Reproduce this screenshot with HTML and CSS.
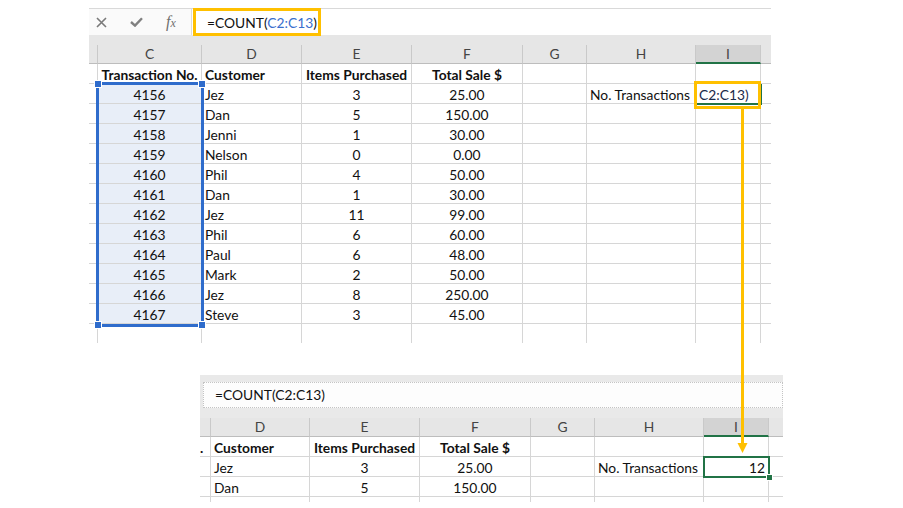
FILE: index.html
```html
<!DOCTYPE html>
<html>
<head>
<meta charset="utf-8">
<link rel="stylesheet" href="styles.css">
</head>
<body>
<div class="top">
  <div class="fbar">
    <div class="fbtns">
      <svg class="ic-x" width="11" height="11" viewBox="0 0 11 11"><path d="M1 1 L10 10 M10 1 L1 10" stroke="#7a7a7a" stroke-width="1.6" fill="none"/></svg>
      <svg class="ic-ok" width="13" height="10" viewBox="0 0 13 10"><path d="M1 5 L5 8.6 L12 1.2" stroke="#808080" stroke-width="2.4" fill="none"/></svg>
      <span class="fx">f<span class="fxx">x</span></span>
    </div>
    <div class="finput"><span class="ftext">=COUNT(<span class="ref">C2:C13</span>)</span><span class="caret"></span></div>
  </div>
  <div class="band"></div>
  <div class="r hdr">
    <div></div><div>C</div><div>D</div><div>E</div><div>F</div><div>G</div><div>H</div><div class="act">I</div><div class="end"></div>
  </div>
  <div class="r b">
    <div></div><div class="c">Transaction No.</div><div>Customer</div><div class="c">Items Purchased</div><div class="c">Total Sale $</div><div></div><div></div><div></div><div class="end"></div>
  </div>
  <div class="r"><div></div><div class="c sel">4156</div><div>Jez</div><div class="c">3</div><div class="c">25.00</div><div></div><div>No. Transactions</div><div class="edit">C2:C13)</div><div class="end"></div></div>
  <div class="r"><div></div><div class="c sel">4157</div><div>Dan</div><div class="c">5</div><div class="c">150.00</div><div></div><div></div><div></div><div class="end"></div></div>
  <div class="r"><div></div><div class="c sel">4158</div><div>Jenni</div><div class="c">1</div><div class="c">30.00</div><div></div><div></div><div></div><div class="end"></div></div>
  <div class="r"><div></div><div class="c sel">4159</div><div>Nelson</div><div class="c">0</div><div class="c">0.00</div><div></div><div></div><div></div><div class="end"></div></div>
  <div class="r"><div></div><div class="c sel">4160</div><div>Phil</div><div class="c">4</div><div class="c">50.00</div><div></div><div></div><div></div><div class="end"></div></div>
  <div class="r"><div></div><div class="c sel">4161</div><div>Dan</div><div class="c">1</div><div class="c">30.00</div><div></div><div></div><div></div><div class="end"></div></div>
  <div class="r"><div></div><div class="c sel">4162</div><div>Jez</div><div class="c">11</div><div class="c">99.00</div><div></div><div></div><div></div><div class="end"></div></div>
  <div class="r"><div></div><div class="c sel">4163</div><div>Phil</div><div class="c">6</div><div class="c">60.00</div><div></div><div></div><div></div><div class="end"></div></div>
  <div class="r"><div></div><div class="c sel">4164</div><div>Paul</div><div class="c">6</div><div class="c">48.00</div><div></div><div></div><div></div><div class="end"></div></div>
  <div class="r"><div></div><div class="c sel">4165</div><div>Mark</div><div class="c">2</div><div class="c">50.00</div><div></div><div></div><div></div><div class="end"></div></div>
  <div class="r"><div></div><div class="c sel">4166</div><div>Jez</div><div class="c">8</div><div class="c">250.00</div><div></div><div></div><div></div><div class="end"></div></div>
  <div class="r"><div></div><div class="c sel">4167</div><div>Steve</div><div class="c">3</div><div class="c">45.00</div><div></div><div></div><div></div><div class="end"></div></div>
  <div class="r last"><div></div><div></div><div></div><div></div><div></div><div></div><div></div><div></div><div class="end"></div></div>

  <div class="range"><i class="h tl"></i><i class="h tr"></i><i class="h bl"></i><i class="h br"></i></div>
  <div class="editcell"></div>
  <div class="hl hl-formula"></div>
  <div class="hl hl-cell"></div>
</div>

<div class="bot">
  <div class="bband">
    <div class="fbox">=COUNT(C2:C13)</div>
  </div>
  <div class="br2 hdr">
    <div></div><div>D</div><div>E</div><div>F</div><div>G</div><div>H</div><div class="act">I</div><div class="end"></div>
  </div>
  <div class="br2 b">
    <div class="dot">.</div><div>Customer</div><div class="c">Items Purchased</div><div class="c">Total Sale $</div><div></div><div></div><div></div><div class="end"></div>
  </div>
  <div class="br2"><div></div><div>Jez</div><div class="c">3</div><div class="c">25.00</div><div></div><div>No. Transactions</div><div class="rt">12</div><div class="end"></div></div>
  <div class="br2"><div></div><div>Dan</div><div class="c">5</div><div class="c">150.00</div><div></div><div></div><div></div><div class="end"></div></div>
  <div class="br2 last"><div></div><div></div><div></div><div></div><div></div><div></div><div></div><div class="end"></div></div>
  <div class="active"><i class="fill"></i></div>
</div>

<svg class="arrow" width="14" height="346" viewBox="0 0 14 346">
  <rect x="5" y="0" width="3" height="337" fill="#ffc000"/>
  <polygon points="1.5,335 11.5,335 6.5,345" fill="#ffc000"/>
</svg>
</body>
</html>
```
FILE: styles.css
```css
body {
  margin: 0;
  background: #fff;
  font-family: Lato, "Open Sans", sans-serif;
  font-size: 13.8px;
  color: #111;
}

.top {
  position: relative;
  margin: 8px 0 0 89px;
  width: 682px;
}

.fbar {
  display: flex;
  height: 27px;
  box-sizing: border-box;
  border-top: 1px solid #d9d9d9;
  background: #fafafa;
}

.fbtns {
  width: 102px;
  display: flex;
  align-items: center;
  padding-left: 7px;
  box-sizing: border-box;
}

.ic-ok { margin-left: 23px; }

.fx {
  margin-left: 23px;
  font-family: "Liberation Serif", serif;
  font-style: italic;
  font-size: 16px;
  color: #6f6f6f;
}
.fxx { font-size: 12px; }

.finput {
  flex: 1;
  display: flex;
  align-items: center;
  background: #fff;
  border-left: 1px solid #dcdcdc;
  padding-left: 15px;
}

.ftext { color: #111; }
.ref { color: #3a6fce; }
.caret {
  display: inline-block;
  width: 1px;
  height: 16px;
  background: #000;
  margin-left: 1px;
}

.band {
  height: 10px;
  background: #e6e6e6;
}

.r {
  display: grid;
  grid-template-columns: 9px 104px 100px 110px 111px 64px 109px 65px 10px;
  height: 20px;
}

.r > div, .br2 > div {
  box-sizing: border-box;
  border-right: 1px solid #d6d6d6;
  border-bottom: 1px solid #d6d6d6;
  padding: 2px 3px 0;
  line-height: 17px;
  white-space: nowrap;
  overflow: hidden;
}

.r > div.end, .br2 > div.end { border-right: none; }

.r.hdr, .br2.hdr {
  height: 19px;
  background: #e6e6e6;
}
.r.hdr > div, .br2.hdr > div {
  border-right-color: #c9c9c9;
  border-bottom-color: #bdbdbd;
  text-align: center;
  color: #444;
  padding-top: 0;
  line-height: 18px;
}
.r.hdr > div.act, .br2.hdr > div.act {
  background: #d3d3d3;
  border-bottom: 2px solid #217346;
}

.b > div { font-weight: 700; }

.c { text-align: center; }
.rt { text-align: right; }

.sel { background: #e8eef8; }

.edit { color: #1b2a4a; }

.r.last { height: 19px; }
.r.last > div, .br2.last > div { border-bottom: none; }

.range {
  position: absolute;
  left: 7px;
  top: 74px;
  width: 108px;
  height: 245px;
  box-sizing: border-box;
  border: 3px solid #2f6ccc;
}
.h {
  position: absolute;
  width: 6px;
  height: 6px;
  background: #2f6ccc;
  border: 1px solid #fff;
}
.h.tl { left: -5px; top: -5px; }
.h.tr { right: -5px; top: -5px; }
.h.bl { left: -5px; bottom: -5px; }
.h.br { right: -5px; bottom: -5px; }

.editcell {
  position: absolute;
  left: 607px;
  top: 76px;
  width: 66px;
  height: 21px;
  box-sizing: border-box;
  border-right: 2px solid #217346;
  border-bottom: 2px solid #217346;
}

.hl {
  position: absolute;
  box-sizing: border-box;
  border: 3px solid #ffc000;
}
.hl-formula {
  left: 104px;
  top: 0;
  width: 128px;
  height: 28px;
}
.hl-cell {
  left: 605px;
  top: 73px;
  width: 67px;
  height: 28px;
}

.bot {
  position: relative;
  margin: 32px 0 0 200px;
  width: 583px;
}

.bband {
  background: #e9e9e9;
  padding: 7px 0 10px 3px;
}

.fbox {
  height: 26px;
  box-sizing: border-box;
  border: 1px dotted #c4c4c4;
  background: #fdfdfd;
  padding-left: 11px;
  line-height: 24px;
  color: #111;
}

.br2 {
  display: grid;
  grid-template-columns: 11px 99px 110px 111px 64px 109px 65px 14px;
  height: 20px;
}
.br2.last { height: 5px; }
.br2 > div.dot { padding: 2px 0 0 0; }

.active {
  position: absolute;
  left: 503px;
  top: 81px;
  width: 67px;
  height: 22px;
  box-sizing: border-box;
  border: 2px solid #217346;
}
.fill {
  position: absolute;
  right: -5px;
  bottom: -5px;
  width: 5px;
  height: 5px;
  background: #217346;
  border: 1px solid #fff;
}

.arrow {
  position: absolute;
  left: 736px;
  top: 108px;
}
```
